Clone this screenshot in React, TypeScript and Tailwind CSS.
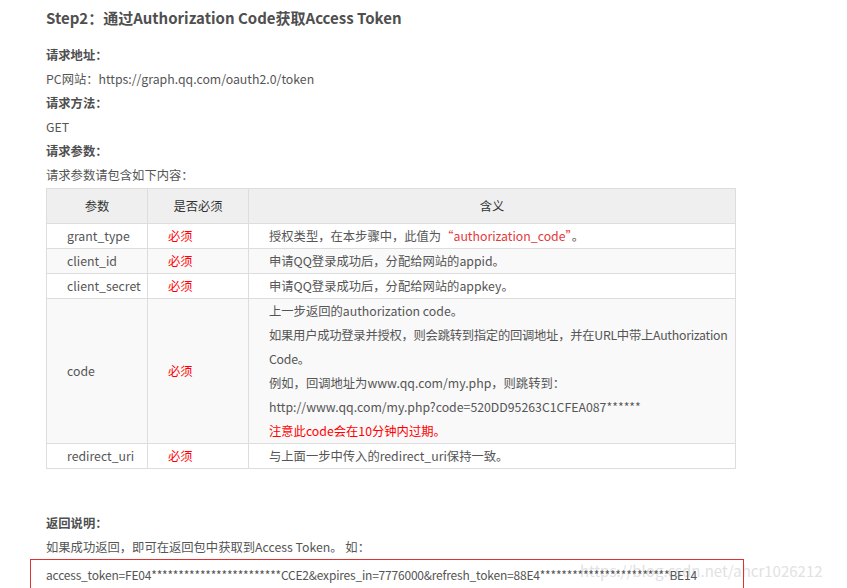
export default function App() {
  const f = { fontFamily: '"Noto Sans CJK SC", "Noto Sans", sans-serif' };
  const td = "border border-[#dddddd] align-middle";
  return (
    <div style={f} className="w-[847px] h-[588px] bg-white text-[#555] text-[12.3px] relative overflow-hidden">
      <div className="absolute left-[580px] top-[560px] text-[15px] text-[#e2e2e2]">https://blog.csdn.net/ahcr1026212</div>
      <div className="relative pl-[46px] pt-[7px]">
        <div className="text-[15px] font-bold text-[#4f4f4f] h-[22px] leading-[22px]">Step2：通过Authorization Code获取Access Token</div>
        <div className="mt-[14px] leading-[24px]">
          <div className="font-bold text-[#4f4f4f]">请求地址：</div>
          <div>PC网站：https://graph.qq.com/oauth2.0/token</div>
          <div className="font-bold text-[#4f4f4f]">请求方法：</div>
          <div>GET</div>
          <div className="font-bold text-[#4f4f4f]">请求参数：</div>
          <div>请求参数请包含如下内容：</div>
        </div>
        <table className="w-[690px] border-collapse border border-[#dddddd] mt-[1px]">
          <tbody>
            <tr className="bg-[#efefef] h-[35px] text-[#333]">
              <td className={`${td} w-[101px] text-center`}>参数</td>
              <td className={`${td} w-[101px] text-center`}>是否必须</td>
              <td className={`${td} text-center`}>含义</td>
            </tr>
            {[
              ["grant_type", <>授权类型，在本步骤中，此值为<span className="text-[#e4393c]">“authorization_code”</span>。</>, "bg-white"],
              ["client_id", "申请QQ登录成功后，分配给网站的appid。", "bg-[#f9f9f9]"],
              ["client_secret", "申请QQ登录成功后，分配给网站的appkey。", "bg-white"],
            ].map(([a, b, bg], i) => (
              <tr key={i} className={`h-[25px] ${bg}`}>
                <td className={`${td} pl-[20px]`}>{a}</td>
                <td className={`${td} pl-[20px] text-[#ff0000]`}>必须</td>
                <td className={`${td} pl-[20px]`}>{b}</td>
              </tr>
            ))}
            <tr className="bg-[#f9f9f9] h-[143px]">
              <td className={`${td} pl-[20px]`}>code</td>
              <td className={`${td} pl-[20px] text-[#ff0000]`}>必须</td>
              <td className={`${td} pl-[20px] pr-0 leading-[24px]`}>
                <div>上一步返回的authorization code。</div>
                <div className="tracking-[-0.25px]">如果用户成功登录并授权，则会跳转到指定的回调地址，并在URL中带上Authorization Code。</div>
                <div>例如，回调地址为www.qq.com/my.php，则跳转到：</div>
                <div>http://www.qq.com/my.php?code=520DD95263C1CFEA087******</div>
                <div className="text-[#ff0000]">注意此code会在10分钟内过期。</div>
              </td>
            </tr>
            <tr className="h-[25px] bg-white">
              <td className={`${td} pl-[20px]`}>redirect_uri</td>
              <td className={`${td} pl-[20px] text-[#ff0000]`}>必须</td>
              <td className={`${td} pl-[20px]`}>与上面一步中传入的redirect_uri保持一致。</td>
            </tr>
          </tbody>
        </table>
        <div className="mt-[42px] leading-[24px]">
          <div className="font-bold text-[#4f4f4f]">返回说明：</div>
          <div>如果成功返回，即可在返回包中获取到Access Token。 如：</div>
        </div>
      </div>
      <div className="relative ml-[30px] mt-[0px] w-[714px] h-[32px] border border-[#e03030] pl-[15px] leading-[30px] whitespace-nowrap text-[12px] tracking-[-0.2px]">
        access_token=FE04************************CCE2&amp;expires_in=7776000&amp;refresh_token=88E4************************BE14
      </div>
    </div>
  );
}
